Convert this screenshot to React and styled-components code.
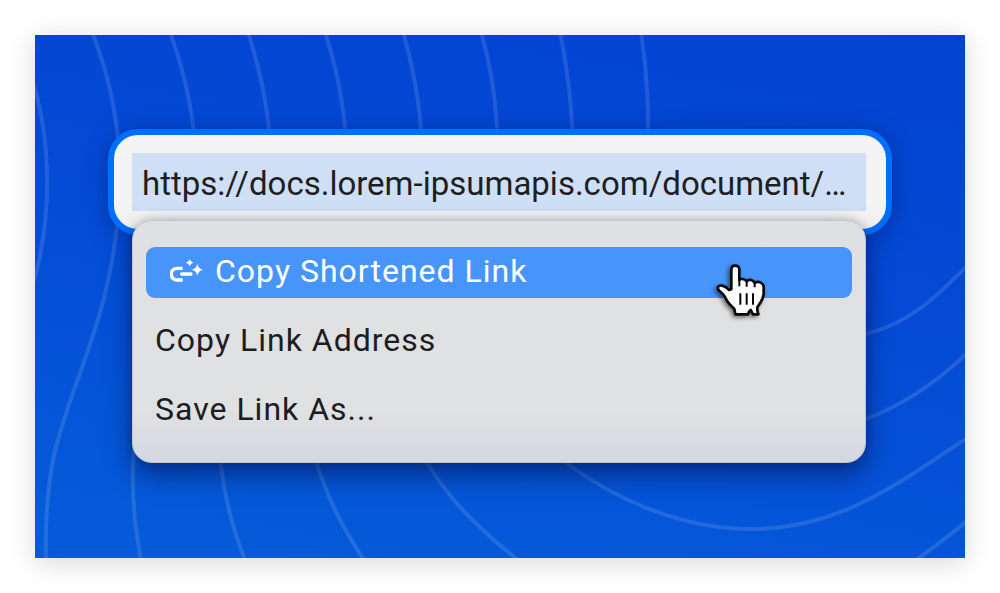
import React from "react";
import styled, { createGlobalStyle } from "styled-components";

const GlobalStyle = createGlobalStyle`
  *, *::before, *::after { box-sizing: border-box; }
  body {
    margin: 0;
    background: #ffffff;
    font-family: Roboto, "Liberation Sans", sans-serif;
  }
`;

const Page = styled.main`
  display: flex;
  min-height: 100vh;
  padding: 35px;
`;

const Stage = styled.section`
  position: relative;
  flex: 1;
  min-width: 0;
  padding: 94px 73px;
  background: linear-gradient(190deg, #0343d2 0%, #044bd5 45%, #055bd9 95%);
  box-shadow: 0 4px 26px rgba(0, 0, 0, 0.16);
`;

const Waves = styled.svg`
  position: absolute;
  inset: 0;
  width: 100%;
  height: 100%;
  fill: none;
  stroke: rgba(255, 255, 255, 0.12);
  stroke-width: 4px;
`;

const Demo = styled.div`
  position: relative;
`;

const AddressBar = styled.div`
  padding: 18px 20px 18px 18px;
  border: 6px solid #0070f8;
  border-radius: 30px;
  background: #f4f4f4;
  box-shadow: 0 4px 24px rgba(0, 20, 90, 0.4);
`;

const AddressInput = styled.input`
  display: block;
  width: 100%;
  height: 58px;
  padding: 2px 8px 0 10px;
  border: 0;
  outline: 0;
  border-radius: 0;
  background: #cfdff6;
  color: #1d1f22;
  font: 400 33px/40px Roboto, "Liberation Sans", sans-serif;
  text-overflow: ellipsis;
`;

const Menu = styled.div`
  position: relative;
  display: flex;
  flex-direction: column;
  gap: 18px;
  margin: -15px 26px 0 24px;
  padding: 26px 13px;
  border: 1px solid #c3c5c9;
  border-radius: 20px;
  background: linear-gradient(#dfe0e2 0%, #e0e1e2 78%, #d3d8e1 100%);
  box-shadow: 0 12px 26px rgba(0, 10, 60, 0.5), 0 0 8px rgba(0, 0, 0, 0.2);
`;

const MenuItem = styled.button`
  position: relative;
  display: flex;
  align-items: center;
  gap: 12px;
  height: 51px;
  padding: 0 ${(p) => (p.$active ? 24 : 9)}px 4px;
  border: 0;
  border-radius: 9px;
  background: ${(p) => (p.$active ? "#4795fa" : "transparent")};
  color: ${(p) => (p.$active ? "#ffffff" : "#1d1d1f")};
  font: 400 32px/40px Roboto, "Liberation Sans", sans-serif;
  letter-spacing: 1px;
  text-align: left;
  white-space: nowrap;
`;

const Pointer = styled.svg`
  position: absolute;
  top: 13px;
  right: 82px;
  width: 56px;
  height: 60px;
  z-index: 1;
  overflow: visible;
  filter: drop-shadow(-2px 2px 2px rgba(0, 0, 0, 0.5));
`;

function SparkLinkIcon() {
  return (
    <svg width="33" height="24" viewBox="63 55 99 72" fill="none" aria-hidden="true">
      <path d="M101 83H84a17 17 0 0 0 0 35H101" stroke="#fff" strokeWidth="10" />
      <path d="M98 100H126" stroke="#fff" strokeWidth="10" strokeLinecap="round" />
      <path d="M122 55Q124 64 133 66Q124 68 122 77Q120 68 111 66Q120 64 122 55Z" fill="#fff" />
      <path d="M145 70Q148 84 162 87Q148 90 145 105Q142 90 128 87Q142 84 145 70Z" fill="#fff" />
    </svg>
  );
}

function HandPointer() {
  return (
    <Pointer viewBox="45 30 168 180" aria-hidden="true">
      <path
        d="M97 118V59Q97 47 108 47Q121 47 121 59V91Q122 86 130 87Q138 87 143 94Q148 88 157 90Q163 92 167 99Q176 93 184 97Q194 102 194 111V132Q192 146 185 157L175 172V181L178 193H162L155 180L150 185L147 193H109L106 177Q95 167 85 154L77 139Q72 131 65 126Q54 118 57 111Q61 105 70 107Q82 110 90 120Z"
        fill="#fff"
        stroke="#080808"
        strokeWidth="8"
        strokeLinejoin="round"
      />
      <path d="M121 88V109M143 95V110M167 99V112M124 130V164M143 130V164M162 130V164" stroke="#080808" strokeWidth="6" />
    </Pointer>
  );
}

export default function App() {
  return (
    <>
      <GlobalStyle />
      <Page>
        <Stage>
          <Waves viewBox="35 35 930 523" preserveAspectRatio="xMidYMid slice" aria-hidden="true">
            <path d="M34 85C51 144 52 216 34 281" />
            <path d="M92 32C121 105 131 190 104 298C88 360 67 400 54 455C47 490 45 525 46 560" />
            <path d="M170 32C196 105 206 180 186 270C165 345 133 390 133 470C132 505 136 532 141 560" />
            <path d="M248 32C273 110 280 190 260 270C240 340 213 390 221 466C225 500 233 530 245 560" />
            <path d="M325 32C347 100 354 170 340 250C315 330 290 380 316 461C328 500 343 528 364 560" />
            <path d="M403 32C424 105 430 180 412 260C395 340 385 400 427 462C449 500 480 530 518 560" />
            <path d="M481 32C498 90 502 150 492 230C480 330 480 400 565 462C620 503 685 529 752 529C840 529 900 482 967 438" />
            <path d="M560 32C572 90 576 150 572 220C565 360 680 470 866 419C905 404 937 382 967 353" />
            <path d="M641 32C650 90 648 130 648 190C652 300 740 365 866 334C910 323 936 297 967 266" />
            <path d="M916 560Q942 542 967 521" />
          </Waves>
          <Demo>
            <AddressBar>
              <AddressInput
                type="text"
                readOnly
                aria-label="Link address"
                value="https://docs.lorem-ipsumapis.com/document/…"
              />
            </AddressBar>
            <Menu role="menu" aria-label="Link options">
              <MenuItem type="button" role="menuitem" $active>
                <SparkLinkIcon />
                Copy Shortened Link
                <HandPointer />
              </MenuItem>
              <MenuItem type="button" role="menuitem">Copy Link Address</MenuItem>
              <MenuItem type="button" role="menuitem">Save Link As...</MenuItem>
            </Menu>
          </Demo>
        </Stage>
      </Page>
    </>
  );
}
